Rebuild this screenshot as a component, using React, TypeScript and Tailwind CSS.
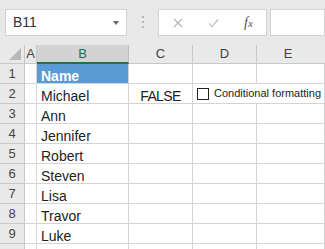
import React from "react";

const names = ["Michael", "Ann", "Jennifer", "Robert", "Steven", "Lisa", "Travor", "Luke"];

const cols = "grid-cols-[25px_12px_92px_64px_64px_1fr]";

function RowNum({ n }: { n?: number }) {
  return (
    <div className="flex h-[20px] items-center justify-center border-r border-b border-[#c8c8c8] bg-[#e9e9e9] pt-[1px] text-[13px] text-[#444]">
      {n}
    </div>
  );
}

function Cell({ children, className = "" }: { children?: React.ReactNode; className?: string }) {
  return (
    <div className={`flex h-[20px] items-end border-r border-b border-[#d4d4d4] leading-[14px] ${className}`}>{children}</div>
  );
}

export default function App() {
  return (
    <div className="h-[249px] w-[325px] overflow-hidden bg-white font-['Liberation_Sans',Arial,sans-serif] text-[#222]">
      {/* formula bar */}
      <div className="flex h-[45px] items-start bg-[#e8e8e8] pt-[9px]">
        <div className="ml-[5px] flex h-[27px] w-[122px] items-center justify-between border border-[#d2d2d2] bg-white pl-[7px] pr-[7px]">
          <span className="text-[14px] text-[#333]">B11</span>
          <span className="h-0 w-0 border-x-[3.5px] border-t-[4px] border-x-transparent border-t-[#666]" />
        </div>
        <div className="flex w-[31px] flex-col items-center gap-[3px] pt-[7px]">
          <span className="h-[2px] w-[2px] rounded-full bg-[#aaa]" />
          <span className="h-[2px] w-[2px] rounded-full bg-[#aaa]" />
          <span className="h-[2px] w-[2px] rounded-full bg-[#aaa]" />
        </div>
        <div className="flex h-[27px] w-[109px] items-center border border-[#d2d2d2] bg-white">
          <svg className="ml-[14px]" width="10" height="10" viewBox="0 0 10 10">
            <path d="M1 1 L9 9 M9 1 L1 9" stroke="#b5b5b5" strokeWidth="1.2" fill="none" />
          </svg>
          <svg className="ml-[25px]" width="11" height="10" viewBox="0 0 11 10">
            <path d="M1 5.5 L4 8.5 L10 1.5" stroke="#c2c2c2" strokeWidth="1.3" fill="none" />
          </svg>
          <span className="ml-[25px] font-['Liberation_Serif',serif] text-[14px] italic text-[#555]">
            f<span className="text-[11px]">x</span>
          </span>
        </div>
        <div className="ml-[3px] h-[27px] flex-1 border border-[#d2d2d2] bg-white" />
      </div>

      {/* sheet */}
      <div className={`grid ${cols}`}>
        {/* header row */}
        <div className="relative h-[19px] border-r border-b border-[#c8c8c8] bg-[#e9e9e9]">
          <span className="absolute bottom-[3px] right-[3px] h-0 w-0 border-b-[12px] border-l-[12px] border-b-[#b8b8b8] border-l-transparent" />
        </div>
        <div className="flex h-[19px] items-center justify-center border-r border-b border-[#c8c8c8] bg-[#e9e9e9] text-[13px] text-[#444]">A</div>
        <div className="flex h-[19px] items-center justify-center border-r border-b-2 border-r-[#bdbdbd] border-b-[#217346] bg-[#d3d3d3] text-[13px] text-[#217346]">B</div>
        <div className="flex h-[19px] items-center justify-center border-r border-b border-[#c8c8c8] bg-[#e9e9e9] text-[13px] text-[#444]">C</div>
        <div className="flex h-[19px] items-center justify-center border-r border-b border-[#c8c8c8] bg-[#e9e9e9] text-[13px] text-[#444]">D</div>
        <div className="flex h-[19px] items-center justify-center border-b border-[#c8c8c8] bg-[#e9e9e9] pr-[6px] text-[13px] text-[#444]">E</div>

        {/* row 1 */}
        <RowNum n={1} />
        <Cell />
        <Cell className="border-[#9bc2e6] bg-[#5b9bd5] pl-[4px] text-[14px] font-bold text-white">Name</Cell>
        <Cell />
        <Cell />
        <Cell />

        {/* row 2 */}
        <RowNum n={2} />
        <Cell />
        <Cell className="border-[#9bc2e6] pl-[4px] text-[14px]">{names[0]}</Cell>
        <Cell className="justify-center text-[14px] tracking-[-0.6px]">FALSE</Cell>
        <div className="relative z-10 flex h-[20px] items-center border-b border-[#d4d4d4] pl-[4px]">
          <span className="h-[12px] w-[12px] shrink-0 border border-[#222] bg-white" />
          <span className="ml-[5px] whitespace-nowrap text-[11px] text-[#222]">Conditional formatting</span>
        </div>
        <Cell />

        {names.slice(1).map((name, i) => (
          <React.Fragment key={name}>
            <RowNum n={i + 3} />
            <Cell />
            <Cell className="border-[#9bc2e6] pl-[4px] text-[14px]">{name}</Cell>
            <Cell />
            <Cell />
            <Cell />
          </React.Fragment>
        ))}

        {/* row 10 */}
        <RowNum />
        <Cell />
        <Cell className="border-[#9bc2e6]" />
        <Cell />
        <Cell />
        <Cell />
      </div>
    </div>
  );
}
